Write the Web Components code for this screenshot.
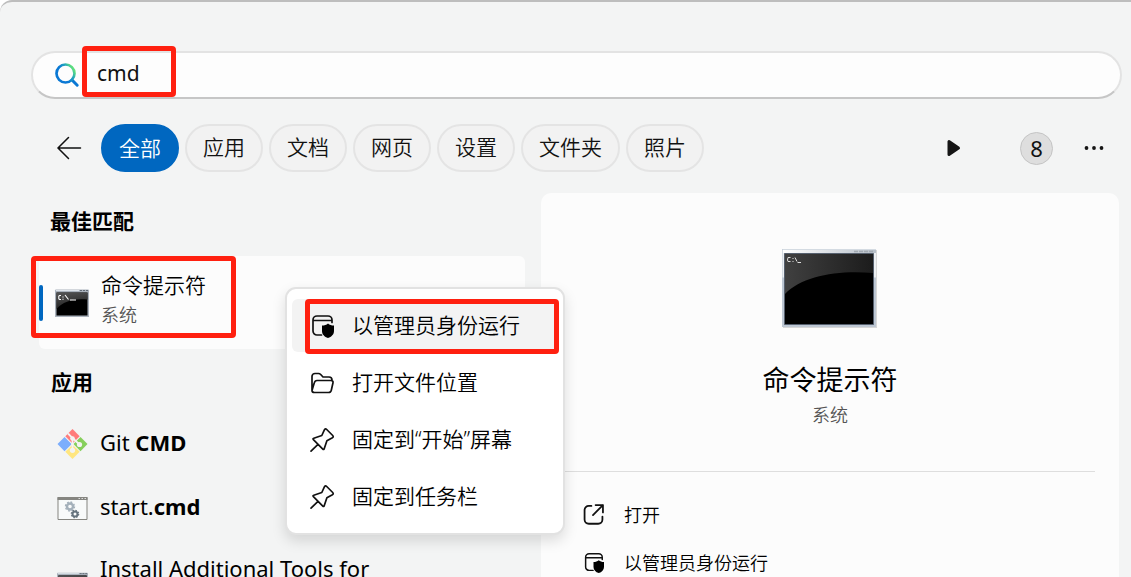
<!DOCTYPE html>
<html lang="zh-CN">
<head>
<meta charset="utf-8">
<title>搜索</title>
<style>
  html, body { margin: 0; height: 100%; background: #fff; }
  body { overflow: hidden; font-family: "Noto Sans", "Noto Sans CJK SC", sans-serif; font-size: 21px; color: #111; }
</style>
</head>
<body>
<search-window></search-window>

<script>
const define = (name, html, setup) => {
  const tpl = document.createElement('template');
  tpl.innerHTML = html;
  customElements.define(name, class extends HTMLElement {
    constructor() {
      super();
      this.attachShadow({ mode: 'open' }).append(tpl.content.cloneNode(true));
    }
    connectedCallback() { if (setup) setup(this, this.shadowRoot); }
  });
};

const line = 'fill="none" stroke="#111" stroke-width="1.7" stroke-linecap="round" stroke-linejoin="round"';
const ICONS = {
  search: `<svg viewBox="0 0 24 24"><defs><linearGradient id="g" x1="0" y1="0.6" x2="0.9" y2="0"><stop offset=".35" stop-color="#0a78d4"/><stop offset=".65" stop-color="#22a5bd"/><stop offset=".9" stop-color="#5fe07c"/></linearGradient></defs><path d="M17 17l5.200 5.200" stroke="#0a78d4" stroke-width="3" stroke-linecap="round"/><circle cx="10.500" cy="10.500" r="9" fill="none" stroke="url(#g)" stroke-width="2.700"/></svg>`,
  back: `<svg viewBox="0 0 24 24"><path d="M23.500 12H1M11.500 1.500L1 12l10.500 10.500" fill="none" stroke="#111" stroke-width="1.500" stroke-linecap="round"/></svg>`,
  play: `<svg viewBox="0 0 24 24"><path d="M7 5.500v13l9.500-6.500z" fill="#151515" stroke="#151515" stroke-width="3" stroke-linejoin="round"/></svg>`,
  more: `<svg viewBox="0 0 24 24" fill="#151515"><circle cx="4.500" cy="12" r="1.900"/><circle cx="12" cy="12" r="1.900"/><circle cx="19.500" cy="12" r="1.900"/></svg>`,
  admin: `<svg viewBox="0 0 24 24"><path d="M11.500 21H7a4 4 0 0 1-4-4V6a4 4 0 0 1 4-4h11a4 4 0 0 1 4 4v2.500M3 6.500h19" ${line}/><path d="M18 9.500c1.600 1.500 3.500 2 6 2v5.500c0 3.500-2.500 5.800-6 7-3.500-1.200-6-3.500-6-7v-5.500c2.500 0 4.400-.5 6-2z" fill="#000"/></svg>`,
  folder: `<svg viewBox="0 0 24 24"><path d="M2 19.500V5.500a3 3 0 0 1 3-3h3.500c1 0 1.500.3 2.200 1L13 6h6a3 3 0 0 1 3 3v.500M2 19.500l2.300-7.700c.4-1.500 1.200-2.300 2.700-2.300h14c1.500 0 2.300 1 2 2.300l-1.700 7.400c-.4 1.500-1.300 2.300-2.800 2.300H4.500c-1.700 0-2.500-.7-2.500-2z" ${line}/></svg>`,
  pin: `<svg viewBox="0 0 24 24"><path d="M14.500 1.700c.7-1 1.400-1 2.200-.2l6 6c.8.800.700 1.600-.3 2.200l-5.500 3-2.700 8c-.3.900-.8 1-1.400.4L3.400 11.700c-.7-.700-.5-1.200.4-1.500l8-2.700zM8 16.300L1 23.200" ${line}/></svg>`,
  open: `<svg viewBox="0 0 20 20"><path d="M8 1.800H5.500a4 4 0 0 0-4 4v9a4 4 0 0 0 4 4h9a4 4 0 0 0 4-4V12M12 1h7v7M19 1l-9.500 9.500" ${line}/></svg>`,
  git: `<svg viewBox="0 0 30 30"><path d="M15 0l7.200 7.200L15 14.500 7.800 7.200z" fill="#ff7b7b"/><path d="M7 8l6.300 6.300c.7.700.7 1 0 1.600L7 22.300 0 15z" fill="#7caefc"/><path d="M23 8l7 7-7 7.300-7-7.300z" fill="#86cf5c"/><path d="M15 15.800l7.200 7-7.200 7.200-7.200-7.200z" fill="#ffe680"/><path d="M10.500 4.500l4.500 4.500v13M15 9l7 6.500" fill="none" stroke="#f3f3f3" stroke-width="1.800"/><circle cx="15" cy="9.500" r="2.300" fill="#f3f3f3"/><circle cx="22" cy="15.500" r="2.600" fill="#f3f3f3"/><circle cx="15" cy="21.300" r="2.600" fill="#f3f3f3"/></svg>`,
  batch: `<svg viewBox="0 0 30 23"><path d="M.5.5h29v22H.5z" fill="#f8fafa" stroke="#858580"/><path d="M0 0h30v3H0z" fill="#858580"/><path d="M21 1.500h1.500M24 1.500h1.500M27 1.500h1.500" stroke="#ddd"/><circle cx="12.500" cy="9.500" r="3" fill="none" stroke="#a4b0ba" stroke-width="2.400"/><circle cx="12.500" cy="9.500" r="4.500" fill="none" stroke="#a4b0ba" stroke-width="1.400" stroke-dasharray="1.800 1.730"/><circle cx="17.500" cy="17" r="2.500" fill="none" stroke="#66747e" stroke-width="2"/><circle cx="17.500" cy="17" r="3.700" fill="none" stroke="#66747e" stroke-width="1.200" stroke-dasharray="1.500 1.400"/></svg>`,
  console: `<svg viewBox="0 0 34 28"><defs><linearGradient id="c" y2="1" x2=".3"><stop stop-color="#555"/><stop offset="1" stop-color="#222"/></linearGradient></defs><path d="M0 1.500Q0 .5 1 .5h32q1 0 1 1V28H0z" fill="#aab2bc"/><path d="M1 1h23v1H1z" fill="#dde3ea"/><path d="M25 1.500h8" stroke="#626b76" stroke-dasharray="2 1"/><path d="M1.500 3.500h31v23h-31z" fill="#000"/><path d="M1.500 3.500h31v7C20 9 8 12 1.500 20z" fill="url(#c)"/><path d="M6 6.500H4.500L3.800 7.300v2.400l.7.800H6M8 7.500v1M8 9.700v1M10 6l3.500 4.500M15 11h6" fill="none" stroke="#fff" stroke-width="1.100"/></svg>`,
  consoleLarge: `<svg viewBox="0 0 96 80"><defs><linearGradient id="d" x2="1"><stop stop-color="#404040"/><stop offset="1" stop-color="#1c1c1c"/></linearGradient><linearGradient id="e" x2="1"><stop stop-color="#fff"/><stop offset="1" stop-color="#b7bfc8"/></linearGradient></defs><path d="M1 1h94v78H1z" fill="#aaa" opacity=".45"/><path d="M0 0h94v78H0z" fill="#bdc7d3"/><path d="M.5.500h93.500v28H.5z" fill="#eceff2"/><path d="M1 1h93v3H1z" fill="url(#e)"/><path d="M72 2.500h20" stroke="#a0a8b0" stroke-width="1.500" stroke-dasharray="4 1"/><path d="M2.500 4.500h89v71h-89z" fill="#000" stroke="#56606e"/><path d="M3 5h88v19C55 21 20 27 3 45z" fill="url(#d)"/><path d="M8.500 8.500H6L5.500 11l.5 1.500h2.500M11 9v1M11 12v1M13 8.500l2 4M15.500 13.500H19" fill="none" stroke="#ddd"/></svg>`
};

define('ui-icon', `<style>:host{display:block;flex:none;width:24px;height:24px}div{height:100%}svg{display:block;width:100%;height:100%;overflow:visible}</style><div></div>`,
  (el, root) => { root.querySelector('div').innerHTML = ICONS[el.getAttribute('name')]; });

define('search-field', `
<style>
  :host { display: block; position: relative; }
  label { display: flex; align-items: center; gap: 18px; box-sizing: border-box; height: 48px; padding: 0 22px;
    border: 2px solid #e3e3e3; border-bottom-color: #c6c6c6; border-radius: 24px; background: #fdfdfd; }
  input { flex: 1; min-width: 0; border: 0; padding: 0 0 4px; outline: 0; background: none; font: inherit; color: inherit; }
</style>
<label><ui-icon name="search"></ui-icon><input type="text" value="cmd" aria-label="搜索"></label><slot></slot>`);

define('filter-chip', `
<style>
  :host { display: block; }
  button { box-sizing: border-box; height: 48px; padding: 0 16px 4px; border: 2px solid #e4e4e4; border-radius: 24px;
    background: #f2f2f2; font: inherit; font-weight: inherit; color: #111; white-space: nowrap; }
  :host([selected]) button { background: #0067c0; border-color: #0067c0; color: #fff; padding-bottom: 2px; }
</style>
<button type="button"><slot></slot></button>`);

define('filter-bar', `
<style>
  :host { display: flex; align-items: center; height: 48px; padding: 0 16px 0 26px; font-weight: 350; }
  button { display: flex; padding: 0; border: 0; background: none; font: inherit; color: inherit; }
  .chips { display: flex; gap: 6px; margin-left: 20px; }
  .tools { display: flex; align-items: center; margin-left: auto; }
  .user { box-sizing: border-box; width: 33px; height: 33px; align-items: center; justify-content: center;
    margin: 0 29px 0 54px; border: 1px solid #c4c4c4; border-radius: 50%; background: #dedede; font-size: 22px; font-weight: 400; }
</style>
<button type="button" aria-label="返回"><ui-icon name="back"></ui-icon></button>
<div class="chips">
  <filter-chip selected>全部</filter-chip><filter-chip>应用</filter-chip><filter-chip>文档</filter-chip>
  <filter-chip>网页</filter-chip><filter-chip>设置</filter-chip><filter-chip>文件夹</filter-chip><filter-chip>照片</filter-chip>
</div>
<div class="tools">
  <button type="button" aria-label="播放"><ui-icon name="play"></ui-icon></button>
  <button type="button" class="user">8</button>
  <button type="button" aria-label="更多"><ui-icon name="more"></ui-icon></button>
</div>`);

define('best-match', `
<style>
  :host { display: block; position: relative; margin-left: 8px; }
  button { display: flex; align-items: center; width: 100%; height: 93px; padding: 0; border: 0; border-radius: 6px;
    background: #fcfcfc; font: inherit; color: #000; text-align: left; }
  .mark { width: 4px; height: 36px; border-radius: 2px; background: #0067c0; }
  ui-icon { width: 34px; height: 28px; margin: 0 12px; }
  .text { display: grid; font-weight: 350; line-height: 30px; padding-bottom: 6px; }
  small { font-size: 18px; line-height: 30px; color: #555; }
</style>
<button type="button"><span class="mark"></span><ui-icon name="console"></ui-icon>
<span class="text"><span>命令提示符</span><small>系统</small></span></button><slot></slot>`);

define('result-item', `
<style>
  :host { display: block; }
  button { display: flex; align-items: center; gap: 12px; width: 100%; height: 64px; padding: 0 26px; border: 0;
    background: none; font: inherit; font-size: 22px; line-height: 32px; color: #000; text-align: left; white-space: nowrap; }
  ui-icon { width: 31px; height: var(--icon-height, 30px); }
  span { padding-bottom: 4px; }
  :host([tall]) button { height: 90px; }
  :host([tall]) span { align-self: flex-start; padding-top: 12px; }
</style>
<button type="button"><ui-icon></ui-icon><span><slot></slot></span></button>`);

define('results-list', `
<style>
  :host { display: block; }
  h2 { margin: 0; padding-left: 19px; font-size: 21px; line-height: 30px; font-weight: 700; color: #000; }
  .first { padding-top: 13px; padding-bottom: 20px; }
  .apps { padding: 18px 0 15px 20px; }
</style>
<h2 class="first">最佳匹配</h2>
<best-match><slot></slot></best-match>
<h2 class="apps">应用</h2>
<div class="items"></div>`, (el, root) => {
  const box = root.querySelector('.items');
  [['git', 30, 'Git <b>CMD</b>'], ['batch', 23, 'start.<b>cmd</b>'], ['console', 28, 'Install Additional Tools for']].forEach(([icon, h, text], i) => {
    const item = document.createElement('result-item');
    item.innerHTML = text;
    item.style.setProperty('--icon-height', h + 'px');
    if (i === 2) item.setAttribute('tall', '');
    item.shadowRoot.querySelector('ui-icon').setAttribute('name', icon);
    box.append(item);
  });
});

define('action-button', `
<style>
  :host { display: block; }
  button { display: flex; align-items: center; gap: 20px; width: 100%; height: 48px; padding: 0 18px; border: 0;
    background: none; font: inherit; font-size: 18px; color: #000; }
  ::slotted(ui-icon) { width: 21px; height: 21px; }
</style>
<button type="button"><slot name="icon"></slot><slot></slot></button>`);

define('detail-panel', `
<style>
  :host { display: block; padding: 56px 24px 0; border-radius: 10px 10px 0 0; background: #fcfcfc; font-weight: 350; }
  header { display: flex; flex-direction: column; align-items: center; height: 222px; border-bottom: 1px solid #dedede; }
  header ui-icon { width: 96px; height: 80px; }
  h1 { margin: 31px 0 0; font-size: 27px; line-height: 40px; font-weight: 400; color: #000; }
  p { margin: 0; font-size: 18px; line-height: 30px; color: #555; }
  .actions { padding-top: 18px; }
</style>
<header><ui-icon name="consoleLarge"></ui-icon><h1>命令提示符</h1><p>系统</p></header>
<div class="actions">
  <action-button><ui-icon slot="icon" name="open"></ui-icon>打开</action-button>
  <action-button><ui-icon slot="icon" name="admin"></ui-icon>以管理员身份运行</action-button>
</div>`);

define('menu-item', `
<style>
  :host { display: block; }
  button { display: flex; align-items: center; gap: 18px; width: 100%; height: 53px; padding: 0 18px; border: 0; border-radius: 6px;
    background: none; font: inherit; font-weight: 350; color: #000; white-space: nowrap; }
  :host([active]) button { background: #f3f3f3; }
  span { padding-bottom: 4px; }
</style>
<button type="button" role="menuitem"><slot name="icon"></slot><span><slot></slot></span></button>`);

define('context-menu', `
<style>
  :host { display: grid; gap: 4px; box-sizing: border-box; width: 280px; padding: 10px 5px; border: 2px solid #e2e2e2;
    border-radius: 11px; background: #fff; box-shadow: 0 6px 14px rgba(0,0,0,.13); }
</style>
<menu-item active><ui-icon slot="icon" name="admin"></ui-icon>以管理员身份运行</menu-item>
<menu-item><ui-icon slot="icon" name="folder"></ui-icon>打开文件位置</menu-item>
<menu-item><ui-icon slot="icon" name="pin"></ui-icon>固定到“开始”屏幕</menu-item>
<menu-item><ui-icon slot="icon" name="pin"></ui-icon>固定到任务栏</menu-item>
<slot></slot>`);

define('red-frame', `<style>:host{display:block;position:absolute;box-sizing:border-box;border:5px solid #ff2010;border-radius:4px;pointer-events:none}</style>`);

define('search-window', `
<style>
  :host { display: flex; flex-direction: column; box-sizing: border-box; height: 100vh; overflow: hidden; position: relative;
    padding: 49px 9px 0 31px; border-top: 2px solid #bdbdbd; border-top-left-radius: 12px; background: #f3f4f4; }
  filter-bar { margin-top: 25px; }
  main { display: grid; grid-template-columns: 494px 1fr; gap: 16px; flex: 1; min-height: 0; margin: 21px 3px 0 0; }
  context-menu { position: absolute; left: 285px; top: 285px; }
  .query { left: 51px; top: -5px; width: 94px; height: 51px; }
  .match { left: -8px; top: 0; width: 205px; height: 82px; }
  .run { left: 18px; top: 10px; width: 254px; height: 55px; }
</style>
<search-field><red-frame class="query"></red-frame></search-field>
<filter-bar></filter-bar>
<main>
  <results-list><red-frame class="match"></red-frame></results-list>
  <detail-panel></detail-panel>
</main>
<context-menu><red-frame class="run"></red-frame></context-menu>`);
</script>
</body>
</html>
